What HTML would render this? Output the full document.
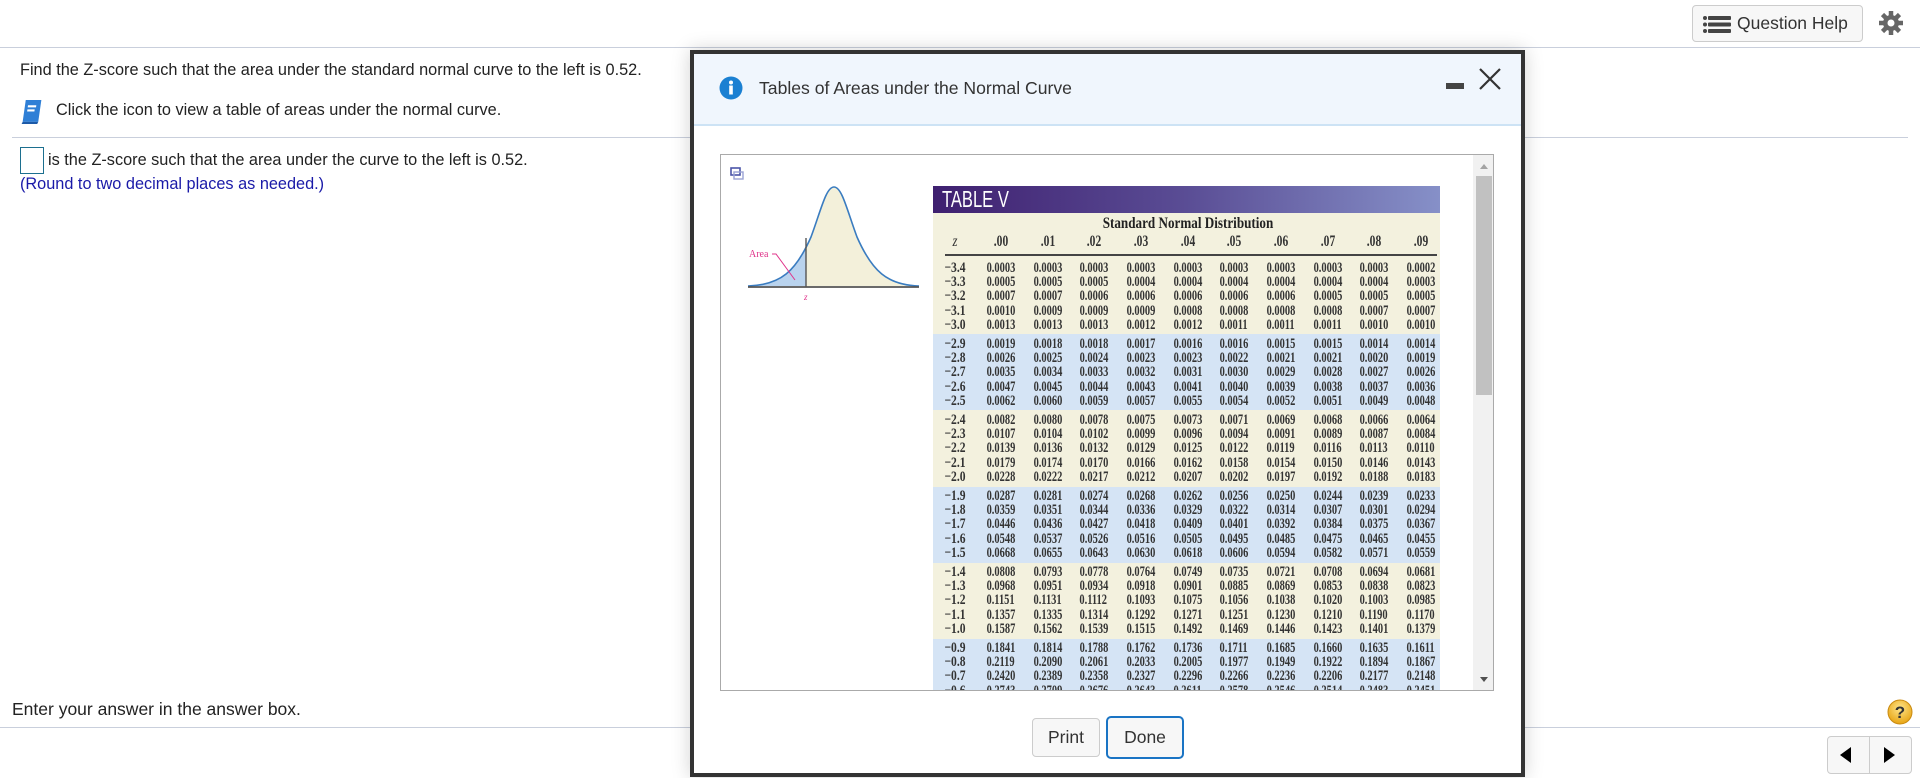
<!DOCTYPE html>
<html><head><meta charset="utf-8"><style>
*{margin:0;padding:0;box-sizing:border-box}
body{width:1920px;height:778px;overflow:hidden;background:#fff;font-family:"Liberation Sans",Arial,sans-serif;color:#222;position:relative}
.abs{position:absolute}
.t{font-size:16.3px;white-space:nowrap}
.hl{position:absolute;height:1px;background:#c9cfdc}
#dlg{position:absolute;left:690px;top:50px;width:835px;height:727px;border:4px solid #333;background:#fff;box-shadow:0 0 18px rgba(0,0,0,.18)}
#sb{position:absolute;left:720px;top:154px;width:774px;height:537px;border:1px solid #aaa;overflow:hidden;background:#fff}
.row{position:absolute;left:0;height:16px;line-height:16px;font-family:"Liberation Serif",serif;font-size:14.5px;font-weight:bold;color:#333;white-space:nowrap}
.row b{position:absolute;left:214px;width:40px;text-align:center;display:inline-block;transform:scaleX(.8)}
.row span{position:absolute;width:47px;text-align:center;display:inline-block}
.row span i{font-style:normal;display:inline-block;transform:scaleX(.72)}
.btn{position:absolute;border:1px solid #ccc;border-radius:4px;background:#f7f7f7;font-size:17.5px;color:#333;text-align:center}
</style></head><body>

<div class="btn" style="left:1692px;top:5px;width:171px;height:37px;line-height:35px;font-size:17.5px;border-color:#ccc">
<svg class="abs" style="left:10px;top:10px" width="28" height="17" viewBox="0 0 28 17"><g fill="#444"><circle cx="2" cy="2" r="2"/><circle cx="2" cy="8.5" r="2"/><circle cx="2" cy="15" r="2"/><rect x="5" y="0" width="23" height="4" rx="1"/><rect x="5" y="6.5" width="23" height="4" rx="1"/><rect x="5" y="13" width="23" height="4" rx="1"/></g></svg>
<span style="position:absolute;left:44px">Question Help</span></div>
<svg class="abs" style="left:1878px;top:10px" width="26" height="26" viewBox="0 0 26 26"><g fill="#666"><circle cx="13" cy="13" r="8"/><g stroke="#666" stroke-width="4.5"><line x1="13" y1="1" x2="13" y2="25"/><line x1="1" y1="13" x2="25" y2="13"/><line x1="4.5" y1="4.5" x2="21.5" y2="21.5"/><line x1="21.5" y1="4.5" x2="4.5" y2="21.5"/></g></g><circle cx="13" cy="13" r="3.5" fill="#fff"/></svg>
<div class="hl" style="left:0;top:47px;width:1920px"></div>

<div class="t abs" style="left:20px;top:61px">Find the Z-score such that the area under the standard normal curve to the left is 0.52.</div>
<svg class="abs" style="left:20px;top:99px" width="24" height="26" viewBox="0 0 22 25"><path d="M5 1 L20 1 L17 22 L2 22 Z" fill="#2f7fd6"/><path d="M2 22 L17 22 L16 24 L1 24 Z" fill="#1c5aa8"/><rect x="8" y="6" width="8" height="2" fill="#fff" transform="skewX(-8)"/><rect x="8" y="10" width="7" height="2" fill="#fff" transform="skewX(-8)"/></svg>
<div class="t abs" style="left:56px;top:101px">Click the icon to view a table of areas under the normal curve.</div>
<div class="hl" style="left:12px;top:137px;width:1896px"></div>

<div class="abs" style="left:20px;top:147px;width:24px;height:27px;border:1px solid #1c6f8f"></div>
<div class="t abs" style="left:48px;top:151px">is the Z-score such that the area under the curve to the left is 0.52.</div>
<div class="t abs" style="left:20px;top:175px;color:#1a1aa8">(Round to two decimal places as needed.)</div>

<div class="t abs" style="left:12px;top:699px;font-size:17.5px">Enter your answer in the answer box.</div>
<div class="hl" style="left:0;top:727px;width:1920px"></div>
<svg class="abs" style="left:1887px;top:699px" width="26" height="26" viewBox="0 0 26 26"><defs><radialGradient id="yg" cx="50%" cy="35%" r="60%"><stop offset="0" stop-color="#ffe58a"/><stop offset="1" stop-color="#e9a91c"/></radialGradient></defs><circle cx="13" cy="13" r="12" fill="url(#yg)" stroke="#c98a10"/><text x="13" y="19" text-anchor="middle" font-family="Liberation Sans" font-weight="bold" font-size="17" fill="#333">?</text></svg>
<div class="abs" style="left:1827px;top:736px;width:85px;height:38px;border:1px solid #ccc;border-radius:4px;background:#f7f7f7"></div>
<div class="abs" style="left:1869px;top:737px;width:1px;height:36px;background:#ccc"></div>
<svg class="abs" style="left:1840px;top:747px" width="60" height="16"><path d="M11 0 L0 8 L11 16Z" fill="#000"/><path d="M44 0 L55 8 L44 16Z" fill="#000"/></svg>

<div id="dlg">
<div class="abs" style="left:0;top:0;width:827px;height:72px;background:#f0f6fd;border-bottom:2px solid #cde3f5"></div>
<svg class="abs" style="left:25px;top:22px" width="24" height="24" viewBox="0 0 24 24"><circle cx="12" cy="12" r="11.5" fill="#1b80d2"/><circle cx="12" cy="6.5" r="2" fill="#fff"/><rect x="10.2" y="9.5" width="3.6" height="9" fill="#fff"/></svg>
<div class="abs" style="left:65px;top:24px;font-size:17.6px;color:#333">Tables of Areas under the Normal Curve</div>
<div class="abs" style="left:752px;top:29px;width:18px;height:6px;background:#444"></div>
<svg class="abs" style="left:785px;top:14px" width="22" height="22"><path d="M1 1L21 21M21 1L1 21" stroke="#333" stroke-width="2.2"/></svg>
</div>

<div id="sb">
<svg class="abs" style="left:9px;top:12px" width="14" height="14"><rect x="1" y="1" width="9" height="7" fill="none" stroke="#4b55a8" stroke-width="1.6"/><rect x="4" y="5" width="9" height="7" fill="none" stroke="#9aa3d4" stroke-width="1.4"/></svg>
<svg class="abs" style="left:0;top:0" width="210" height="150">
<defs><clipPath id="lc"><rect x="0" y="0" width="85" height="150"/></clipPath></defs>
<path d="M27,131 C60,130 75,116 90,82 C100,55 105,32 113,32 C121,32 126,55 136,82 C151,116 166,130 198,131 Z" fill="#f3f0da"/>
<path d="M27,131 C60,130 75,116 90,82 C100,55 105,32 113,32 C121,32 126,55 136,82 C151,116 166,130 198,131 Z" fill="#b9d3ee" clip-path="url(#lc)"/>
<path d="M27,131 C60,130 75,116 90,82 C100,55 105,32 113,32 C121,32 126,55 136,82 C151,116 166,130 198,131" fill="none" stroke="#3a7cc0" stroke-width="1.6"/>
<line x1="85" y1="83" x2="85" y2="132" stroke="#555" stroke-width="1.4"/>
<line x1="27" y1="132" x2="198" y2="132" stroke="#555" stroke-width="1.8"/>
<text x="28" y="102" font-family="Liberation Serif" font-size="10" fill="#e0338a">Area</text>
<path d="M51,99 L55,99 L74,125" fill="none" stroke="#e0338a" stroke-width="1"/>
<text x="83" y="145" font-family="Liberation Serif" font-style="italic" font-size="9" fill="#e0338a">z</text>
</svg>

<div class="abs" style="left:212px;top:31px;width:507px;height:27px;background:linear-gradient(90deg,#3f2070,#5a4d95 50%,#8690c8)"></div>
<div class="abs" style="left:221px;top:31px;color:#fff;font-size:23px;font-family:'Liberation Sans',sans-serif;transform:scaleX(.72);transform-origin:left">TABLE V</div>
<div class="abs" style="left:212px;top:58px;width:507px;height:121px;background:#f3f1de"></div>
<div class="abs" style="left:212px;top:179px;width:507px;height:76px;background:#d5e4f5"></div>
<div class="abs" style="left:212px;top:255px;width:507px;height:77px;background:#f3f1de"></div>
<div class="abs" style="left:212px;top:332px;width:507px;height:76px;background:#d5e4f5"></div>
<div class="abs" style="left:212px;top:408px;width:507px;height:76px;background:#f3f1de"></div>
<div class="abs" style="left:212px;top:484px;width:507px;height:60px;background:#d5e4f5"></div>
<div class="abs" style="left:280px;top:60px;width:374px;text-align:center;font-family:'Liberation Serif',serif;font-weight:bold;font-size:16px;color:#222;transform:scaleX(.82)">Standard Normal Distribution</div>
<div class="row" style="top:79px;font-size:16px"><b style="font-style:italic;font-weight:normal">z</b><span style="left:256px"><i>.00</i></span><span style="left:303px"><i>.01</i></span><span style="left:349px"><i>.02</i></span><span style="left:396px"><i>.03</i></span><span style="left:443px"><i>.04</i></span><span style="left:489px"><i>.05</i></span><span style="left:536px"><i>.06</i></span><span style="left:583px"><i>.07</i></span><span style="left:629px"><i>.08</i></span><span style="left:676px"><i>.09</i></span></div>
<div class="abs" style="left:224px;top:99px;width:492px;height:2px;background:#444"></div>

<div class="row" style="top:105px"><b>−3.4</b><span style="left:256px"><i>0.0003</i></span><span style="left:303px"><i>0.0003</i></span><span style="left:349px"><i>0.0003</i></span><span style="left:396px"><i>0.0003</i></span><span style="left:443px"><i>0.0003</i></span><span style="left:489px"><i>0.0003</i></span><span style="left:536px"><i>0.0003</i></span><span style="left:583px"><i>0.0003</i></span><span style="left:629px"><i>0.0003</i></span><span style="left:676px"><i>0.0002</i></span></div>
<div class="row" style="top:119px"><b>−3.3</b><span style="left:256px"><i>0.0005</i></span><span style="left:303px"><i>0.0005</i></span><span style="left:349px"><i>0.0005</i></span><span style="left:396px"><i>0.0004</i></span><span style="left:443px"><i>0.0004</i></span><span style="left:489px"><i>0.0004</i></span><span style="left:536px"><i>0.0004</i></span><span style="left:583px"><i>0.0004</i></span><span style="left:629px"><i>0.0004</i></span><span style="left:676px"><i>0.0003</i></span></div>
<div class="row" style="top:133px"><b>−3.2</b><span style="left:256px"><i>0.0007</i></span><span style="left:303px"><i>0.0007</i></span><span style="left:349px"><i>0.0006</i></span><span style="left:396px"><i>0.0006</i></span><span style="left:443px"><i>0.0006</i></span><span style="left:489px"><i>0.0006</i></span><span style="left:536px"><i>0.0006</i></span><span style="left:583px"><i>0.0005</i></span><span style="left:629px"><i>0.0005</i></span><span style="left:676px"><i>0.0005</i></span></div>
<div class="row" style="top:148px"><b>−3.1</b><span style="left:256px"><i>0.0010</i></span><span style="left:303px"><i>0.0009</i></span><span style="left:349px"><i>0.0009</i></span><span style="left:396px"><i>0.0009</i></span><span style="left:443px"><i>0.0008</i></span><span style="left:489px"><i>0.0008</i></span><span style="left:536px"><i>0.0008</i></span><span style="left:583px"><i>0.0008</i></span><span style="left:629px"><i>0.0007</i></span><span style="left:676px"><i>0.0007</i></span></div>
<div class="row" style="top:162px"><b>−3.0</b><span style="left:256px"><i>0.0013</i></span><span style="left:303px"><i>0.0013</i></span><span style="left:349px"><i>0.0013</i></span><span style="left:396px"><i>0.0012</i></span><span style="left:443px"><i>0.0012</i></span><span style="left:489px"><i>0.0011</i></span><span style="left:536px"><i>0.0011</i></span><span style="left:583px"><i>0.0011</i></span><span style="left:629px"><i>0.0010</i></span><span style="left:676px"><i>0.0010</i></span></div>

<div class="row" style="top:181px"><b>−2.9</b><span style="left:256px"><i>0.0019</i></span><span style="left:303px"><i>0.0018</i></span><span style="left:349px"><i>0.0018</i></span><span style="left:396px"><i>0.0017</i></span><span style="left:443px"><i>0.0016</i></span><span style="left:489px"><i>0.0016</i></span><span style="left:536px"><i>0.0015</i></span><span style="left:583px"><i>0.0015</i></span><span style="left:629px"><i>0.0014</i></span><span style="left:676px"><i>0.0014</i></span></div>
<div class="row" style="top:195px"><b>−2.8</b><span style="left:256px"><i>0.0026</i></span><span style="left:303px"><i>0.0025</i></span><span style="left:349px"><i>0.0024</i></span><span style="left:396px"><i>0.0023</i></span><span style="left:443px"><i>0.0023</i></span><span style="left:489px"><i>0.0022</i></span><span style="left:536px"><i>0.0021</i></span><span style="left:583px"><i>0.0021</i></span><span style="left:629px"><i>0.0020</i></span><span style="left:676px"><i>0.0019</i></span></div>
<div class="row" style="top:209px"><b>−2.7</b><span style="left:256px"><i>0.0035</i></span><span style="left:303px"><i>0.0034</i></span><span style="left:349px"><i>0.0033</i></span><span style="left:396px"><i>0.0032</i></span><span style="left:443px"><i>0.0031</i></span><span style="left:489px"><i>0.0030</i></span><span style="left:536px"><i>0.0029</i></span><span style="left:583px"><i>0.0028</i></span><span style="left:629px"><i>0.0027</i></span><span style="left:676px"><i>0.0026</i></span></div>
<div class="row" style="top:224px"><b>−2.6</b><span style="left:256px"><i>0.0047</i></span><span style="left:303px"><i>0.0045</i></span><span style="left:349px"><i>0.0044</i></span><span style="left:396px"><i>0.0043</i></span><span style="left:443px"><i>0.0041</i></span><span style="left:489px"><i>0.0040</i></span><span style="left:536px"><i>0.0039</i></span><span style="left:583px"><i>0.0038</i></span><span style="left:629px"><i>0.0037</i></span><span style="left:676px"><i>0.0036</i></span></div>
<div class="row" style="top:238px"><b>−2.5</b><span style="left:256px"><i>0.0062</i></span><span style="left:303px"><i>0.0060</i></span><span style="left:349px"><i>0.0059</i></span><span style="left:396px"><i>0.0057</i></span><span style="left:443px"><i>0.0055</i></span><span style="left:489px"><i>0.0054</i></span><span style="left:536px"><i>0.0052</i></span><span style="left:583px"><i>0.0051</i></span><span style="left:629px"><i>0.0049</i></span><span style="left:676px"><i>0.0048</i></span></div>

<div class="row" style="top:257px"><b>−2.4</b><span style="left:256px"><i>0.0082</i></span><span style="left:303px"><i>0.0080</i></span><span style="left:349px"><i>0.0078</i></span><span style="left:396px"><i>0.0075</i></span><span style="left:443px"><i>0.0073</i></span><span style="left:489px"><i>0.0071</i></span><span style="left:536px"><i>0.0069</i></span><span style="left:583px"><i>0.0068</i></span><span style="left:629px"><i>0.0066</i></span><span style="left:676px"><i>0.0064</i></span></div>
<div class="row" style="top:271px"><b>−2.3</b><span style="left:256px"><i>0.0107</i></span><span style="left:303px"><i>0.0104</i></span><span style="left:349px"><i>0.0102</i></span><span style="left:396px"><i>0.0099</i></span><span style="left:443px"><i>0.0096</i></span><span style="left:489px"><i>0.0094</i></span><span style="left:536px"><i>0.0091</i></span><span style="left:583px"><i>0.0089</i></span><span style="left:629px"><i>0.0087</i></span><span style="left:676px"><i>0.0084</i></span></div>
<div class="row" style="top:285px"><b>−2.2</b><span style="left:256px"><i>0.0139</i></span><span style="left:303px"><i>0.0136</i></span><span style="left:349px"><i>0.0132</i></span><span style="left:396px"><i>0.0129</i></span><span style="left:443px"><i>0.0125</i></span><span style="left:489px"><i>0.0122</i></span><span style="left:536px"><i>0.0119</i></span><span style="left:583px"><i>0.0116</i></span><span style="left:629px"><i>0.0113</i></span><span style="left:676px"><i>0.0110</i></span></div>
<div class="row" style="top:300px"><b>−2.1</b><span style="left:256px"><i>0.0179</i></span><span style="left:303px"><i>0.0174</i></span><span style="left:349px"><i>0.0170</i></span><span style="left:396px"><i>0.0166</i></span><span style="left:443px"><i>0.0162</i></span><span style="left:489px"><i>0.0158</i></span><span style="left:536px"><i>0.0154</i></span><span style="left:583px"><i>0.0150</i></span><span style="left:629px"><i>0.0146</i></span><span style="left:676px"><i>0.0143</i></span></div>
<div class="row" style="top:314px"><b>−2.0</b><span style="left:256px"><i>0.0228</i></span><span style="left:303px"><i>0.0222</i></span><span style="left:349px"><i>0.0217</i></span><span style="left:396px"><i>0.0212</i></span><span style="left:443px"><i>0.0207</i></span><span style="left:489px"><i>0.0202</i></span><span style="left:536px"><i>0.0197</i></span><span style="left:583px"><i>0.0192</i></span><span style="left:629px"><i>0.0188</i></span><span style="left:676px"><i>0.0183</i></span></div>

<div class="row" style="top:333px"><b>−1.9</b><span style="left:256px"><i>0.0287</i></span><span style="left:303px"><i>0.0281</i></span><span style="left:349px"><i>0.0274</i></span><span style="left:396px"><i>0.0268</i></span><span style="left:443px"><i>0.0262</i></span><span style="left:489px"><i>0.0256</i></span><span style="left:536px"><i>0.0250</i></span><span style="left:583px"><i>0.0244</i></span><span style="left:629px"><i>0.0239</i></span><span style="left:676px"><i>0.0233</i></span></div>
<div class="row" style="top:347px"><b>−1.8</b><span style="left:256px"><i>0.0359</i></span><span style="left:303px"><i>0.0351</i></span><span style="left:349px"><i>0.0344</i></span><span style="left:396px"><i>0.0336</i></span><span style="left:443px"><i>0.0329</i></span><span style="left:489px"><i>0.0322</i></span><span style="left:536px"><i>0.0314</i></span><span style="left:583px"><i>0.0307</i></span><span style="left:629px"><i>0.0301</i></span><span style="left:676px"><i>0.0294</i></span></div>
<div class="row" style="top:361px"><b>−1.7</b><span style="left:256px"><i>0.0446</i></span><span style="left:303px"><i>0.0436</i></span><span style="left:349px"><i>0.0427</i></span><span style="left:396px"><i>0.0418</i></span><span style="left:443px"><i>0.0409</i></span><span style="left:489px"><i>0.0401</i></span><span style="left:536px"><i>0.0392</i></span><span style="left:583px"><i>0.0384</i></span><span style="left:629px"><i>0.0375</i></span><span style="left:676px"><i>0.0367</i></span></div>
<div class="row" style="top:376px"><b>−1.6</b><span style="left:256px"><i>0.0548</i></span><span style="left:303px"><i>0.0537</i></span><span style="left:349px"><i>0.0526</i></span><span style="left:396px"><i>0.0516</i></span><span style="left:443px"><i>0.0505</i></span><span style="left:489px"><i>0.0495</i></span><span style="left:536px"><i>0.0485</i></span><span style="left:583px"><i>0.0475</i></span><span style="left:629px"><i>0.0465</i></span><span style="left:676px"><i>0.0455</i></span></div>
<div class="row" style="top:390px"><b>−1.5</b><span style="left:256px"><i>0.0668</i></span><span style="left:303px"><i>0.0655</i></span><span style="left:349px"><i>0.0643</i></span><span style="left:396px"><i>0.0630</i></span><span style="left:443px"><i>0.0618</i></span><span style="left:489px"><i>0.0606</i></span><span style="left:536px"><i>0.0594</i></span><span style="left:583px"><i>0.0582</i></span><span style="left:629px"><i>0.0571</i></span><span style="left:676px"><i>0.0559</i></span></div>

<div class="row" style="top:409px"><b>−1.4</b><span style="left:256px"><i>0.0808</i></span><span style="left:303px"><i>0.0793</i></span><span style="left:349px"><i>0.0778</i></span><span style="left:396px"><i>0.0764</i></span><span style="left:443px"><i>0.0749</i></span><span style="left:489px"><i>0.0735</i></span><span style="left:536px"><i>0.0721</i></span><span style="left:583px"><i>0.0708</i></span><span style="left:629px"><i>0.0694</i></span><span style="left:676px"><i>0.0681</i></span></div>
<div class="row" style="top:423px"><b>−1.3</b><span style="left:256px"><i>0.0968</i></span><span style="left:303px"><i>0.0951</i></span><span style="left:349px"><i>0.0934</i></span><span style="left:396px"><i>0.0918</i></span><span style="left:443px"><i>0.0901</i></span><span style="left:489px"><i>0.0885</i></span><span style="left:536px"><i>0.0869</i></span><span style="left:583px"><i>0.0853</i></span><span style="left:629px"><i>0.0838</i></span><span style="left:676px"><i>0.0823</i></span></div>
<div class="row" style="top:437px"><b>−1.2</b><span style="left:256px"><i>0.1151</i></span><span style="left:303px"><i>0.1131</i></span><span style="left:349px"><i>0.1112</i></span><span style="left:396px"><i>0.1093</i></span><span style="left:443px"><i>0.1075</i></span><span style="left:489px"><i>0.1056</i></span><span style="left:536px"><i>0.1038</i></span><span style="left:583px"><i>0.1020</i></span><span style="left:629px"><i>0.1003</i></span><span style="left:676px"><i>0.0985</i></span></div>
<div class="row" style="top:452px"><b>−1.1</b><span style="left:256px"><i>0.1357</i></span><span style="left:303px"><i>0.1335</i></span><span style="left:349px"><i>0.1314</i></span><span style="left:396px"><i>0.1292</i></span><span style="left:443px"><i>0.1271</i></span><span style="left:489px"><i>0.1251</i></span><span style="left:536px"><i>0.1230</i></span><span style="left:583px"><i>0.1210</i></span><span style="left:629px"><i>0.1190</i></span><span style="left:676px"><i>0.1170</i></span></div>
<div class="row" style="top:466px"><b>−1.0</b><span style="left:256px"><i>0.1587</i></span><span style="left:303px"><i>0.1562</i></span><span style="left:349px"><i>0.1539</i></span><span style="left:396px"><i>0.1515</i></span><span style="left:443px"><i>0.1492</i></span><span style="left:489px"><i>0.1469</i></span><span style="left:536px"><i>0.1446</i></span><span style="left:583px"><i>0.1423</i></span><span style="left:629px"><i>0.1401</i></span><span style="left:676px"><i>0.1379</i></span></div>

<div class="row" style="top:485px"><b>−0.9</b><span style="left:256px"><i>0.1841</i></span><span style="left:303px"><i>0.1814</i></span><span style="left:349px"><i>0.1788</i></span><span style="left:396px"><i>0.1762</i></span><span style="left:443px"><i>0.1736</i></span><span style="left:489px"><i>0.1711</i></span><span style="left:536px"><i>0.1685</i></span><span style="left:583px"><i>0.1660</i></span><span style="left:629px"><i>0.1635</i></span><span style="left:676px"><i>0.1611</i></span></div>
<div class="row" style="top:499px"><b>−0.8</b><span style="left:256px"><i>0.2119</i></span><span style="left:303px"><i>0.2090</i></span><span style="left:349px"><i>0.2061</i></span><span style="left:396px"><i>0.2033</i></span><span style="left:443px"><i>0.2005</i></span><span style="left:489px"><i>0.1977</i></span><span style="left:536px"><i>0.1949</i></span><span style="left:583px"><i>0.1922</i></span><span style="left:629px"><i>0.1894</i></span><span style="left:676px"><i>0.1867</i></span></div>
<div class="row" style="top:513px"><b>−0.7</b><span style="left:256px"><i>0.2420</i></span><span style="left:303px"><i>0.2389</i></span><span style="left:349px"><i>0.2358</i></span><span style="left:396px"><i>0.2327</i></span><span style="left:443px"><i>0.2296</i></span><span style="left:489px"><i>0.2266</i></span><span style="left:536px"><i>0.2236</i></span><span style="left:583px"><i>0.2206</i></span><span style="left:629px"><i>0.2177</i></span><span style="left:676px"><i>0.2148</i></span></div>
<div class="row" style="top:528px"><b>−0.6</b><span style="left:256px"><i>0.2743</i></span><span style="left:303px"><i>0.2709</i></span><span style="left:349px"><i>0.2676</i></span><span style="left:396px"><i>0.2643</i></span><span style="left:443px"><i>0.2611</i></span><span style="left:489px"><i>0.2578</i></span><span style="left:536px"><i>0.2546</i></span><span style="left:583px"><i>0.2514</i></span><span style="left:629px"><i>0.2483</i></span><span style="left:676px"><i>0.2451</i></span></div>

<div class="abs" style="left:752px;top:0;width:21px;height:537px;background:#f1f1f1"></div>
<div class="abs" style="left:755px;top:21px;width:16px;height:219px;background:#c1c1c1"></div>
<svg class="abs" style="left:757px;top:8px" width="12" height="8"><path d="M2 6L6 1L10 6Z" fill="#a3a3a3"/></svg>
<svg class="abs" style="left:757px;top:521px" width="12" height="8"><path d="M2 1L6 6L10 1Z" fill="#505050"/></svg>
</div>

<div class="btn" style="left:1032px;top:718px;width:68px;height:39px;line-height:37px">Print</div>
<div class="btn" style="left:1106px;top:716px;width:78px;height:43px;line-height:39px;border:2px solid #1a74c4;border-radius:5px">Done</div>
</body></html>
